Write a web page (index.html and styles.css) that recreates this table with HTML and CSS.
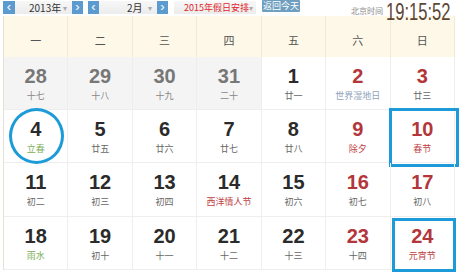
FILE: index.html
```html
<!DOCTYPE html>
<html lang="zh">
<head>
<meta charset="utf-8">
<link rel="stylesheet" href="styles.css">
</head>
<body>
<div class="toolbar">
  <span class="btn btn-first">&lsaquo;</span>
  <span class="sel sel-year"><span class="sel-text">2013年</span><span class="caret">▾</span></span>
  <span class="btn">&rsaquo;</span>
  <span class="btn btn-gap">&lsaquo;</span>
  <span class="sel sel-month"><span class="sel-text">2月</span><span class="caret">▾</span></span>
  <span class="btn">&rsaquo;</span>
  <span class="sel sel-holiday"><span class="sel-text red">2015年假日安排</span><span class="caret">▾</span></span>
  <span class="today">返回今天</span>
  <span class="bj">北京时间</span>
  <span class="clock"><span class="clock-inner">19:15:52</span></span>
</div>
<div class="cal">
  <div class="wk">一</div><div class="wk">二</div><div class="wk">三</div><div class="wk">四</div><div class="wk">五</div><div class="wk">六</div><div class="wk">日</div>

  <div class="day other"><b>28</b><i>十七</i></div>
  <div class="day other"><b>29</b><i>十八</i></div>
  <div class="day other"><b>30</b><i>十九</i></div>
  <div class="day other"><b>31</b><i>二十</i></div>
  <div class="day"><b>1</b><i>廿一</i></div>
  <div class="day we"><b>2</b><i class="blue">世界湿地日</i></div>
  <div class="day we"><b>3</b><i>廿三</i></div>

  <div class="day"><b>4</b><i class="green">立春</i><span class="circle"></span></div>
  <div class="day"><b>5</b><i>廿五</i></div>
  <div class="day"><b>6</b><i>廿六</i></div>
  <div class="day"><b>7</b><i>廿七</i></div>
  <div class="day"><b>8</b><i>廿八</i></div>
  <div class="day we"><b>9</b><i class="fest">除夕</i></div>
  <div class="day we"><b>10</b><i class="fest">春节</i><span class="box box-10"></span></div>

  <div class="day"><b>11</b><i>初二</i></div>
  <div class="day"><b>12</b><i>初三</i></div>
  <div class="day"><b>13</b><i>初四</i></div>
  <div class="day"><b>14</b><i class="fest">西洋情人节</i></div>
  <div class="day"><b>15</b><i>初六</i></div>
  <div class="day we"><b>16</b><i>初七</i></div>
  <div class="day we"><b>17</b><i>初八</i></div>

  <div class="day"><b>18</b><i class="green">雨水</i></div>
  <div class="day"><b>19</b><i>初十</i></div>
  <div class="day"><b>20</b><i>十一</i></div>
  <div class="day"><b>21</b><i>十二</i></div>
  <div class="day"><b>22</b><i>十三</i></div>
  <div class="day we"><b>23</b><i>十四</i></div>
  <div class="day we"><b>24</b><i class="fest">元宵节</i><span class="box box-24"></span></div>
</div>
</body>
</html>
```
FILE: styles.css
```css
html, body {
  margin: 0;
  padding: 0;
  background: #fff;
}
body {
  width: 474px;
  height: 273px;
  overflow: hidden;
  font-family: "Liberation Sans", "Noto Sans CJK SC", sans-serif;
}
.toolbar {
  display: flex;
  align-items: center;
  height: 14px;
  padding-left: 3px;
  white-space: nowrap;
}
.btn {
  width: 11px;
  height: 13px;
  background: #5b9bcf;
  color: #fff;
  font-size: 13px;
  line-height: 12px;
  text-align: center;
  flex: none;
}
.btn-first { width: 12px; }
.btn-gap { margin-left: 5px; }
.sel {
  display: flex;
  align-items: center;
  height: 13px;
  background: linear-gradient(#f7f7f7, #ececec);
  font-size: 10px;
  color: #333;
  flex: none;
  font-family: "Noto Sans CJK SC", sans-serif;
}
.sel-text { line-height: 13px; white-space: nowrap; }
.caret {
  margin-left: auto;
  color: #aaa;
  font-size: 8px;
  padding-right: 5px;
}
.sel-year { width: 57px; padding-left: 14px; box-sizing: border-box; }
.sel-month { width: 58px; padding-left: 28px; box-sizing: border-box; }
.sel-holiday { width: 82px; margin-left: 6px; padding-left: 10px; box-sizing: border-box; }
.sel-holiday .sel-text { font-size: 9px; }
.red { color: #e0262c; }
.today {
  margin-left: 6px;
  width: 38px;
  height: 12px;
  background: #6e9fc0;
  color: #fff;
  font-size: 9px;
  line-height: 12px;
  text-align: center;
  align-self: flex-start;
  font-family: "Noto Sans CJK SC", sans-serif;
  border-radius: 1px;
}
.bj {
  margin-left: 51px;
  font-size: 8px;
  color: #888;
  font-family: "Noto Sans CJK SC", sans-serif;
  align-self: flex-start;
  margin-top: 5px;
}
.clock {
  margin-left: 3px;
  width: 65px;
  height: 24px;
  align-self: flex-start;
}
.clock-inner {
  display: inline-block;
  font-size: 23px;
  line-height: 24px;
  color: #5c4634;
  white-space: nowrap;
  transform: scaleX(0.72);
  transform-origin: left top;
}
.cal {
  margin-top: 2px;
  margin-left: 3px;
  width: 452px;
  display: grid;
  grid-template-columns: repeat(7, 1fr);
  grid-template-rows: 41px 53px 53px 54px 53px;
  border-left: 1px solid #e6e2d8;
  box-sizing: border-box;
}
.wk {
  background: #fdf8e8;
  border-right: 1px solid #f1ead3;
  color: #555;
  font-size: 11px;
  text-align: center;
  padding-top: 16px;
  line-height: 16px;
  font-family: "Noto Sans CJK SC", sans-serif;
}
.day {
  position: relative;
  border-right: 1px solid #eeeeee;
  border-bottom: 1px solid #eeeeee;
  text-align: center;
  display: flex;
  flex-direction: column;
  align-items: center;
  padding-top: 8px;
  box-sizing: border-box;
}
.day b {
  font-size: 20px;
  line-height: 22px;
  font-weight: bold;
  color: #2b2b2b;
}
.day i {
  font-style: normal;
  font-size: 9px;
  line-height: 13px;
  margin-top: 2px;
  color: #666;
  font-family: "Noto Sans CJK SC", sans-serif;
}
.day.other { background: #f4f4f4; }
.day.other b { color: #777; }
.day.other i { color: #888; }
.day.we b { color: #b3363b; }
.day i.fest { color: #c0403f; }
.day i.green { color: #7cad57; }
.day i.blue { color: #8ea2ba; }
.circle {
  position: absolute;
  left: 5px;
  top: -2px;
  width: 55px;
  height: 56px;
  border: 3px solid #1c9bd8;
  border-radius: 50%;
  box-sizing: border-box;
}
.box {
  position: absolute;
  border: 3px solid #1c9bd8;
  box-sizing: border-box;
}
.box-10 { left: -2px; top: -2px; width: 70px; height: 59px; }
.box-24 { left: 1px; top: 1px; width: 64px; height: 54px; }
```
